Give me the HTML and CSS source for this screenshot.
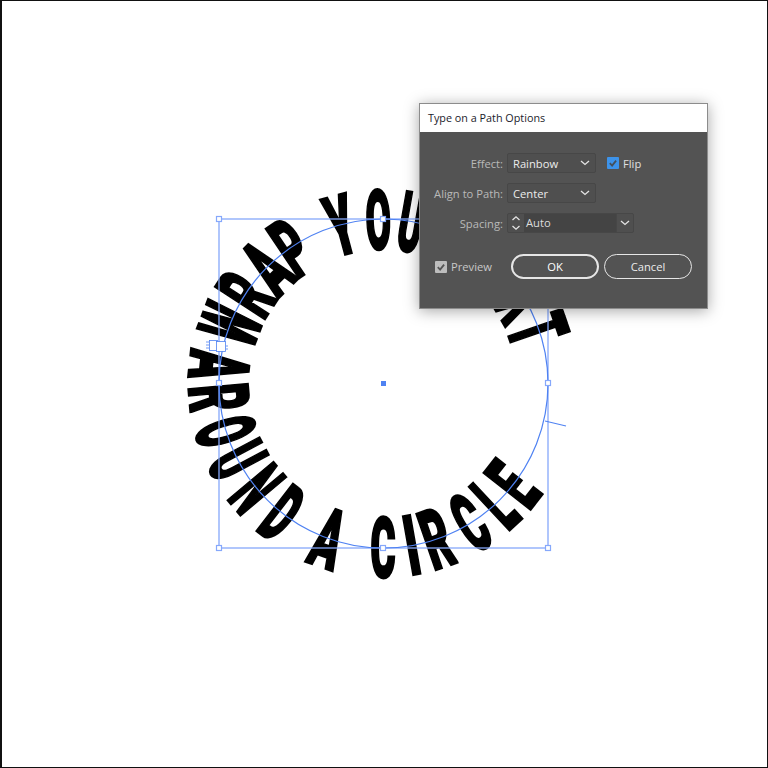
FILE: index.html
```html
<!DOCTYPE html>
<html lang="en">
<head>
    <meta charset="UTF-8">
    <meta name="viewport" content="width=device-width, initial-scale=1.0">
    <title>Type on a Path Options</title>
    <link rel="stylesheet" href="styles.css">
</head>
<body>
    <main class="lienzo">
        <svg class="arte" viewBox="0 0 768 768" width="768" height="768">
            <!-- top string, feet on r=134 -->
            <g class="letras">
                <text transform="rotate(-69 383 383) translate(383 249) scale(.46 1)">W</text>
                <text transform="rotate(-57 383 383) translate(383 249) scale(.5 1)">R</text>
                <text transform="rotate(-45 383 383) translate(383 249) scale(.52 1)">A</text>
                <text transform="rotate(-34 383 383) translate(383 249) scale(.5 1)">P</text>
                <text transform="rotate(-15 383 383) translate(383 249) scale(.52 1)">Y</text>
                <text transform="rotate(-1.7 383 383) translate(383 249) scale(.44 1)">O</text>
                <text transform="rotate(10 383 383) translate(383 249) scale(.44 1)">U</text>
                <text transform="rotate(22 383 383) translate(383 249) scale(.5 1)">R</text>
                <text transform="rotate(38 383 383) translate(383 249) scale(.5 1)">T</text>
                <text transform="rotate(49 383 383) translate(383 249) scale(.5 1)">E</text>
                <text transform="rotate(60 383 383) translate(383 249) scale(.5 1)">X</text>
                <text transform="rotate(71 383 383) translate(383 249) scale(.5 1)">T</text>
            </g>
            <!-- bottom string, feet on r=194 -->
            <g class="letras">
                <text transform="rotate(96 383 383) translate(383 577) scale(.52 1)">A</text>
                <text transform="rotate(85 383 383) translate(383 577) scale(.5 1)">R</text>
                <text transform="rotate(73 383 383) translate(383 577) scale(.44 1)">O</text>
                <text transform="rotate(62 383 383) translate(383 577) scale(.44 1)">U</text>
                <text transform="rotate(50 383 383) translate(383 577) scale(.42 1)">N</text>
                <text transform="rotate(37.6 383 383) translate(383 577) scale(.46 1)">D</text>
                <text transform="rotate(19.3 383 383) translate(383 577) scale(.52 1)">A</text>
                <text transform="rotate(0 383 383) translate(383 577) scale(.46 1)">C</text>
                <text transform="rotate(-10 383 383) translate(383 577) scale(.55 1)">I</text>
                <text transform="rotate(-19 383 383) translate(383 577) scale(.5 1)">R</text>
                <text transform="rotate(-32 383 383) translate(383 577) scale(.46 1)">C</text>
                <text transform="rotate(-43 383 383) translate(383 577) scale(.47 1)">L</text>
                <text transform="rotate(-52 383 383) translate(383 577) scale(.5 1)">E</text>
            </g>

            <rect class="caja" x="219" y="219" width="329" height="329"/>
            <circle class="trazo" cx="383.5" cy="383.5" r="164.5"/>
            <line class="trazo" x1="545" y1="421" x2="566" y2="426"/>

            <g class="puerto">
                <path d="M206 342h3M206 345h3M206 348h3M226 346h2M226 349h2"/>
                <rect x="209.5" y="340.5" width="8" height="10"/>
                <rect x="216.5" y="341.5" width="9" height="10"/>
            </g>

            <g class="tirador">
                <rect x="216.5" y="216.5" width="5" height="5"/>
                <rect x="380.5" y="216.5" width="5" height="5"/>
                <rect x="545.5" y="216.5" width="5" height="5"/>
                <rect x="216.5" y="380.5" width="5" height="5"/>
                <rect x="545.5" y="380.5" width="5" height="5"/>
                <rect x="216.5" y="545.5" width="5" height="5"/>
                <rect x="380.5" y="545.5" width="5" height="5"/>
                <rect x="545.5" y="545.5" width="5" height="5"/>
            </g>
            <rect class="centro" x="381" y="381" width="5" height="5"/>
        </svg>

        <section class="dialogo">
            <h1 class="titulo">Type on a Path Options</h1>
            <form class="cuerpo">
                <div class="fila">
                    <span class="etiqueta">Effect:</span>
                    <div class="desplegable">
                        <span>Rainbow</span>
                        <svg class="flecha" viewBox="0 0 10 6" width="10" height="6"><path d="M1 1l4 3.5L9 1"/></svg>
                    </div>
                    <div class="marca marca-flip">
                        <span class="casilla casilla-azul">
                            <svg viewBox="0 0 12 12" width="12" height="12"><path d="M2.8 6.2l2.3 2.4 4-5"/></svg>
                        </span>
                        <span>Flip</span>
                    </div>
                </div>
                <div class="fila">
                    <span class="etiqueta">Align to Path:</span>
                    <div class="desplegable">
                        <span>Center</span>
                        <svg class="flecha" viewBox="0 0 10 6" width="10" height="6"><path d="M1 1l4 3.5L9 1"/></svg>
                    </div>
                </div>
                <div class="fila">
                    <span class="etiqueta">Spacing:</span>
                    <div class="combo">
                        <span class="pasos">
                            <svg viewBox="0 0 10 16" width="10" height="16"><path d="M1.5 5L5 1.8 8.5 5M1.5 11L5 14.2 8.5 11"/></svg>
                        </span>
                        <span class="valor">Auto</span>
                        <span class="abrir">
                            <svg class="flecha" viewBox="0 0 10 6" width="10" height="6"><path d="M1 1l4 3.5L9 1"/></svg>
                        </span>
                    </div>
                </div>
                <div class="pie">
                    <div class="marca marca-preview">
                        <span class="casilla casilla-gris">
                            <svg viewBox="0 0 12 12" width="12" height="12"><path d="M2.8 6.2l2.3 2.4 4-5"/></svg>
                        </span>
                        <span>Preview</span>
                    </div>
                    <button type="button" class="boton boton-ok">OK</button>
                    <button type="button" class="boton">Cancel</button>
                </div>
            </form>
        </section>
    </main>
</body>
</html>
```

FILE: styles.css
```css
:root {
    --gris-panel: #535353;
    --gris-campo: #4f4f4f;
    --borde-campo: #474747;
    --azul-trazo: #4f82f2;
    --azul-caja: #86a8fb;
}
body {
    margin: 0;
    background: white;
    font-family: 'Open Sans', 'Noto Sans', sans-serif;
    font-size: 11.2px;
}
.lienzo {
    position: relative;
    box-sizing: border-box;
    width: 768px;
    height: 768px;
    overflow: hidden;
    border: 1px solid #111;
    border-width: 1px 1px 1px 2px;
}
.arte {
    position: absolute;
    left: -2px;
    top: -1px;
}
.letras text {
    font-family: Roboto, 'Liberation Sans', sans-serif;
    font-weight: 900;
    font-size: 83px;
    text-anchor: middle;
    fill: black;
    stroke: black;
    stroke-width: 2.2px;
    vector-effect: non-scaling-stroke;
}
.caja {
    fill: none;
    stroke: var(--azul-caja);
    stroke-width: 1.3;
}
.trazo {
    fill: none;
    stroke: var(--azul-trazo);
    stroke-width: 1.2;
}
.puerto {
    fill: white;
    stroke: var(--azul-trazo);
    stroke-width: 0.8;
}
.tirador rect {
    fill: white;
    stroke: var(--azul-caja);
    stroke-width: 1.2;
}
.centro {
    fill: var(--azul-trazo);
}

/* dialog */
.dialogo {
    position: absolute;
    left: 417px;
    top: 102px;
    box-sizing: border-box;
    width: 289px;
    height: 206px;
    border: 1px solid #8c8c8c;
    background: var(--gris-panel);
    box-shadow: 0 2px 14px rgba(0,0,0,0.35);
}
.titulo {
    margin: 0;
    height: 28px;
    padding-left: 8px;
    background: white;
    color: #1a1a2a;
    font-size: 10.8px;
    font-weight: normal;
    line-height: 27px;
}
.cuerpo {
    display: flex;
    flex-direction: column;
    gap: 10px;
    padding-top: 21px;
}
.fila {
    display: flex;
    align-items: center;
    height: 20px;
}
.etiqueta {
    width: 83px;
    margin-right: 4px;
    text-align: right;
    color: #b9b9b9;
}
.desplegable {
    display: flex;
    justify-content: space-between;
    align-items: center;
    box-sizing: border-box;
    width: 89px;
    height: 20px;
    padding: 0 5px 0 5px;
    background: var(--gris-campo);
    border: 1px solid var(--borde-campo);
    border-radius: 2px;
    color: #ececec;
}
.flecha path,
.pasos path,
.casilla path {
    fill: none;
    stroke: #e4e4e4;
    stroke-width: 1.3;
}
.marca {
    display: flex;
    align-items: center;
    gap: 4px;
    color: #e0e0e0;
}
.marca-flip {
    margin-left: 11px;
}
.casilla {
    display: block;
    width: 12px;
    height: 12px;
    border-radius: 1px;
}
.casilla svg {
    display: block;
}
.casilla path {
    stroke: #44505c;
    stroke-width: 1.8;
}
.casilla-azul {
    background: #3d93ea;
}
.casilla-gris {
    background: #bdbdbd;
}
.casilla-gris path {
    stroke: #555;
}
.combo {
    display: flex;
    box-sizing: border-box;
    width: 127px;
    height: 20px;
    border: 1px solid var(--borde-campo);
    border-radius: 2px;
    background: var(--gris-campo);
    color: #dcdcdc;
}
.pasos {
    display: flex;
    align-items: center;
    justify-content: center;
    width: 16px;
}
.valor {
    flex: 1;
    padding-left: 2px;
    background: #444;
    line-height: 18px;
}
.abrir {
    display: flex;
    align-items: center;
    justify-content: center;
    width: 16px;
    border-left: 1px solid var(--borde-campo);
}
.pie {
    display: flex;
    align-items: center;
    margin-top: 11px;
    padding-left: 15px;
}
.marca-preview {
    width: 76px;
    color: #c8c8c8;
}
.boton {
    box-sizing: border-box;
    width: 88px;
    height: 25px;
    margin-right: 5px;
    padding: 0;
    background: transparent;
    border: 1px solid #e6e6e6;
    border-radius: 13px;
    color: #ececec;
    font: inherit;
}
.boton-ok {
    border-width: 2px;
    color: white;
}
```
